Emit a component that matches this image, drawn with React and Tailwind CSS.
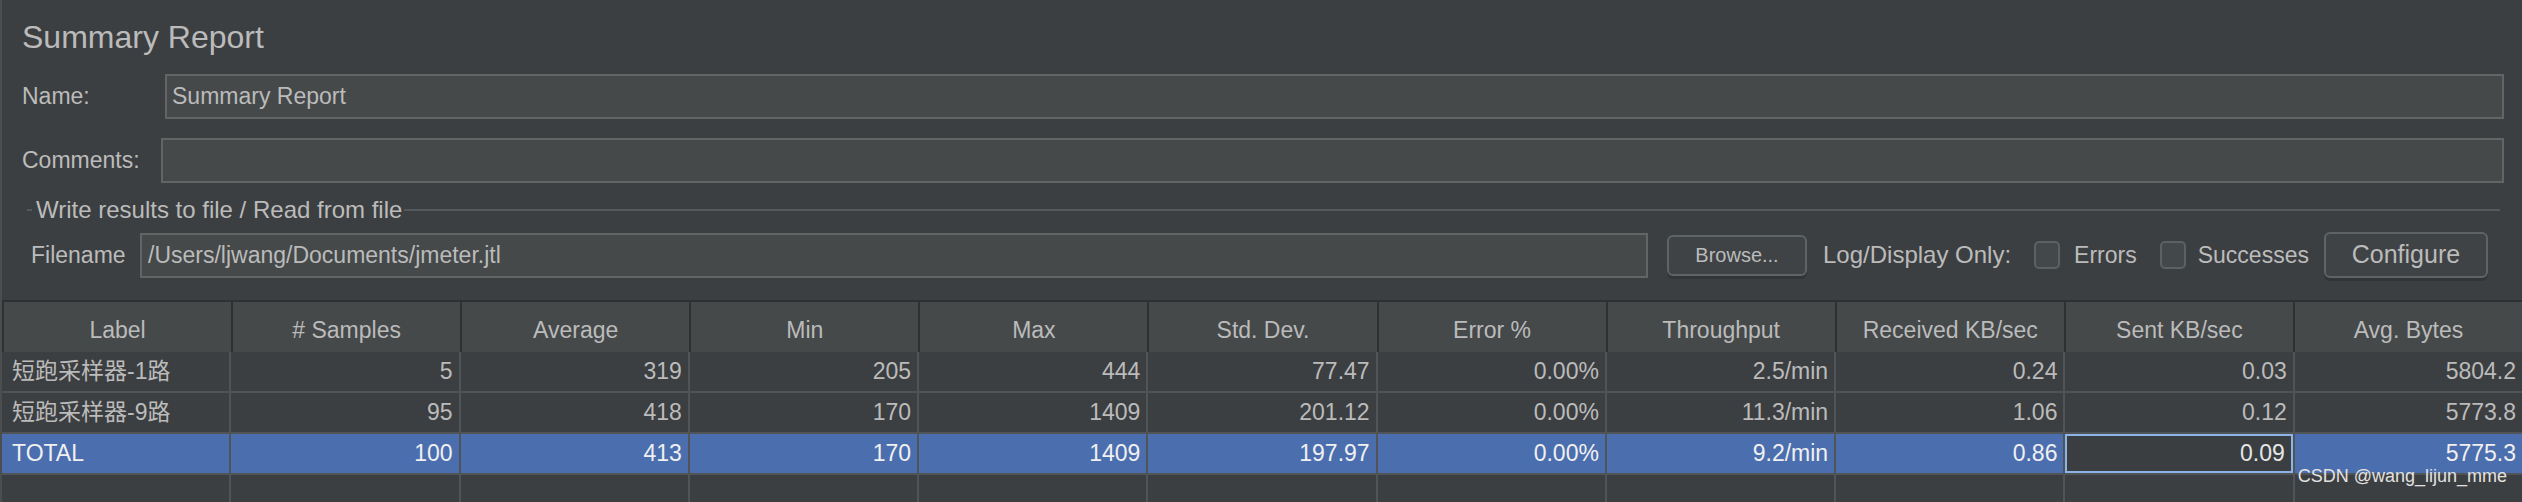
import React from "react";

const headers = [
  "Label",
  "# Samples",
  "Average",
  "Min",
  "Max",
  "Std. Dev.",
  "Error %",
  "Throughput",
  "Received KB/sec",
  "Sent KB/sec",
  "Avg. Bytes",
];

const rows = [
  ["短跑采样器-1路", "5", "319", "205", "444", "77.47", "0.00%", "2.5/min", "0.24", "0.03", "5804.2"],
  ["短跑采样器-9路", "95", "418", "170", "1409", "201.12", "0.00%", "11.3/min", "1.06", "0.12", "5773.8"],
  ["TOTAL", "100", "413", "170", "1409", "197.97", "0.00%", "9.2/min", "0.86", "0.09", "5775.3"],
];

function Checkbox() {
  return <div className="h-[28px] w-[26px] shrink-0 rounded-[5px] border-2 border-[#5c6164] bg-[#43494a]" />;
}

export default function App() {
  return (
    <div className="relative h-[502px] w-[2522px] overflow-hidden border-l-2 border-[#4b4e50] bg-[#3c3f41] font-['Liberation_Sans','Noto_Sans_CJK_SC',sans-serif] text-[#bbbbbb]">
      <div className="pl-[20px] pr-[18px]">
        {/* Title */}
        <div className="h-[74px] pt-[21px] text-[32px] leading-[32px]">Summary Report</div>

        {/* Name */}
        <div className="flex h-[45px] items-center">
          <div className="w-[143px] shrink-0 text-[23px]">Name:</div>
          <div className="flex h-full flex-1 items-center border-2 border-[#646464] bg-[#45494a] pl-[5px] text-[23px]">
            Summary Report
          </div>
        </div>

        {/* Comments */}
        <div className="mt-[19px] flex h-[45px] items-center">
          <div className="w-[139px] shrink-0 text-[23px]">Comments:</div>
          <div className="h-full flex-1 border-2 border-[#646464] bg-[#45494a]" />
        </div>

        {/* Fieldset title */}
        <div className="mt-[14px] flex h-[26px] items-center">
          <div className="ml-[5px] h-[2px] w-[5px] bg-[#56595b]" />
          <div className="ml-[4px] text-[24px] leading-[26px]">Write results to file / Read from file</div>
          <div className="ml-[2px] mr-[4px] h-[2px] flex-1 bg-[#56595b]" />
        </div>

        {/* Filename row */}
        <div className="mt-[9px] flex h-[46px] items-center">
          <div className="ml-[9px] w-[109px] shrink-0 text-[23px]">Filename</div>
          <div className="flex h-[45px] w-[1508px] shrink-0 items-center border-2 border-[#646464] bg-[#45494a] pl-[6px] text-[23px]">
            /Users/ljwang/Documents/jmeter.jtl
          </div>
          <div className="ml-[19px] flex h-[41px] w-[140px] shrink-0 items-center justify-center rounded-[6px] border-2 border-[#5e6366] bg-[#3f4345] text-[20px] shadow-[0_3px_0_#323436]">
            Browse...
          </div>
          <div className="ml-[16px] shrink-0 text-[24px]">Log/Display Only:</div>
          <div className="ml-[23px]">
            <Checkbox />
          </div>
          <div className="ml-[14px] shrink-0 text-[23px]">Errors</div>
          <div className="ml-[23px]">
            <Checkbox />
          </div>
          <div className="ml-[12px] shrink-0 text-[23px]">Successes</div>
          <div className="ml-[15px] flex h-[46px] w-[164px] shrink-0 items-center justify-center rounded-[6px] border-2 border-[#5e6366] bg-[#3f4345] text-[25px] shadow-[0_3px_0_#323436]">
            Configure
          </div>
        </div>
      </div>

      {/* Table */}
      <div className="mt-[22px] border-t-2 border-[#2e3032]">
        <div className="grid h-[50px] grid-cols-11 gap-x-[2px] bg-[#2e3032] pl-[2px]">
          {headers.map((h) => (
            <div key={h} className="flex items-center justify-center bg-[#45494a] pt-[6px] text-[23px]">
              {h}
            </div>
          ))}
        </div>
        <div className="grid grid-cols-11 gap-[2px] bg-[#505457]">
          {rows.map((r, ri) =>
            r.map((c, ci) => {
              const total = ri === 2;
              const focus = total && ci === 9;
              let cls = "flex h-[39px] items-center text-[23px] ";
              cls += ci === 0 ? "justify-start pl-[10px] " : "justify-end pr-[6px] ";
              if (focus) cls += "border-2 border-[#8cb4e8] bg-[#3b3e40] text-[#e6e6e6]";
              else if (total) cls += "bg-[#4b6eaf] text-[#f0f0f0]";
              else cls += "bg-[#3c3f41]";
              return (
                <div key={ri + "-" + ci} className={cls}>
                  {c}
                </div>
              );
            })
          )}
          {headers.map((h) => (
            <div key={"e" + h} className="h-[39px] bg-[#3c3f41]" />
          ))}
        </div>
      </div>

      <div className="absolute bottom-[12px] right-[15px] text-[18px] text-[#e2e2e2]">CSDN @wang_lijun_mme</div>
    </div>
  );
}
